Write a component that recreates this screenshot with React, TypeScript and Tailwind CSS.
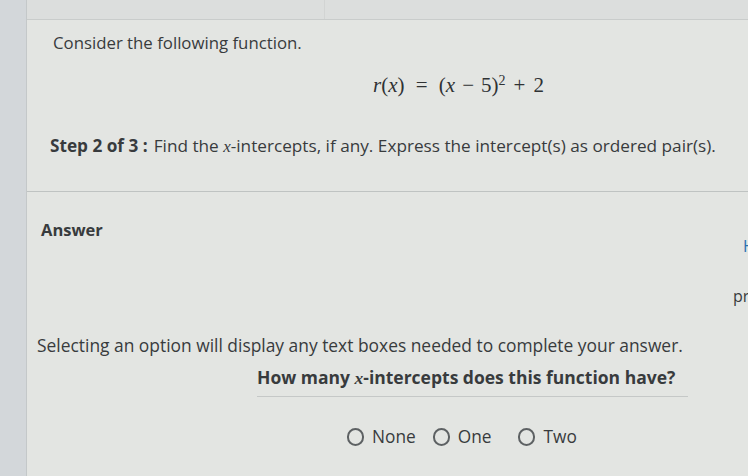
import { useState } from 'react';

const OPTIONS = ['None', 'One', 'Two'];

export default function App() {
  const [choice, setChoice] = useState<string | null>(null);

  return (
    <div
      className="flex h-[476px] w-[748px] overflow-hidden bg-[#d4d8da] text-[#383b3d]"
      style={{ fontFamily: '"Open Sans", "Noto Sans", sans-serif' }}
    >
      <div className="w-[27px] shrink-0 border-r border-[#c4c8c9] bg-[#d3d7da]" />

      <div className="flex min-w-0 flex-1 flex-col bg-[#e3e5e2]">
        <div className="flex h-[20px] shrink-0 border-b border-[#c9cccb] bg-[#dcdedd]">
          <div className="w-[298px] border-r border-[#d2d4d3]" />
        </div>

        <section className="h-[172px] shrink-0 border-b border-[#bfc3c2] pt-[13px]">
          <p className="pl-[26px] text-[16.8px] leading-5">Consider the following function.</p>
          <div
            className="mt-[20px] pl-[346px] text-[21px] leading-6 text-[#2f3234]"
            style={{ fontFamily: '"Liberation Serif", serif' }}
          >
            <i>r</i>(<i>x</i>) <span className="px-[6px]">=</span> (<i>x</i>
            <span className="px-[7px]">−</span>5)
            <sup className="text-[14px]">2</sup>
            <span className="px-[8px]">+</span>2
          </div>
          <p className="mt-[39px] pl-[23px] text-[17.2px] leading-5 whitespace-nowrap">
            <span className="font-bold">Step 2 of 3 :</span>
            <span className="ml-[6px]">Find the </span>
            <i className="text-[17px]" style={{ fontFamily: '"Liberation Serif", serif' }}>
              x
            </i>
            -intercepts, if any. Express the intercept(s) as ordered pair(s).
          </p>
        </section>

        <section className="flex flex-1">
          <div className="min-w-0 flex-1">
            <h2 className="mt-[28px] pl-[14px] text-[16.5px] font-bold leading-5">Answer</h2>
            <p className="mt-[95px] pl-[10px] text-[17.4px] leading-5 whitespace-nowrap">
              Selecting an option will display any text boxes needed to complete your answer.
            </p>
            <div className="mt-[12px] ml-[230px] w-[431px] border-b border-[#c5c8c7] pb-[8px]">
              <p className="text-[17.5px] font-bold leading-5 whitespace-nowrap">
                How many{' '}
                <i className="text-[17.5px]" style={{ fontFamily: '"Liberation Serif", serif' }}>
                  x
                </i>
                -intercepts does this function have?
              </p>
            </div>
            <div className="mt-[30px] ml-[320px] flex items-center text-[17.3px] leading-5">
              {OPTIONS.map((option, index) => (
                <label
                  key={option}
                  className={`flex cursor-pointer items-center gap-[8px] ${index === 0 ? '' : index === 1 ? 'ml-[17px]' : 'ml-[27px]'}`}
                >
                  <input
                    type="radio"
                    name="count"
                    checked={choice === option}
                    onChange={() => setChoice(option)}
                    className="sr-only"
                  />
                  <span className="grid h-[18px] w-[17px] place-items-center rounded-full border-2 border-[#5d6163]">
                    {choice === option ? <span className="size-[7px] rounded-full bg-[#5d6163]" /> : null}
                  </span>
                  {option}
                </label>
              ))}
            </div>
          </div>
          <div className="w-[15px] shrink-0 overflow-hidden text-[16px] leading-5">
            <p className="mt-[44px] pl-[10px] text-[#2a6fb0]">H</p>
            <p className="mt-[30px] whitespace-nowrap">pr</p>
          </div>
        </section>
      </div>
    </div>
  );
}
